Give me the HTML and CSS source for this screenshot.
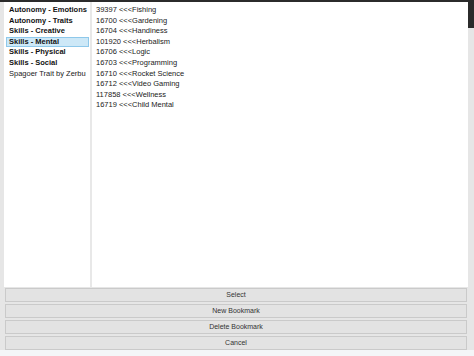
FILE: index.html
```html
<!DOCTYPE html>
<html>
<head>
<meta charset="utf-8">
<link rel="stylesheet" href="styles.css">
</head>
<body>
<div class="window">
  <ul class="cats">
    <li class="b">Autonomy - Emotions</li>
    <li class="b">Autonomy - Traits</li>
    <li class="b">Skills - Creative</li>
    <li class="b sel">Skills - Mental</li>
    <li class="b">Skills - Physical</li>
    <li class="b">Skills - Social</li>
    <li>Spagoer Trait by Zerbu</li>
  </ul>
  <ul class="items">
    <li>39397 &lt;&lt;&lt;Fishing</li>
    <li>16700 &lt;&lt;&lt;Gardening</li>
    <li>16704 &lt;&lt;&lt;Handiness</li>
    <li>101920 &lt;&lt;&lt;Herbalism</li>
    <li>16706 &lt;&lt;&lt;Logic</li>
    <li>16703 &lt;&lt;&lt;Programming</li>
    <li>16710 &lt;&lt;&lt;Rocket Science</li>
    <li>16712 &lt;&lt;&lt;Video Gaming</li>
    <li>117858 &lt;&lt;&lt;Wellness</li>
    <li>16719 &lt;&lt;&lt;Child Mental</li>
  </ul>
</div>
<div class="buttons">
  <button class="btn">Select</button>
  <button class="btn">New Bookmark</button>
  <button class="btn">Delete Bookmark</button>
  <button class="btn">Cancel</button>
</div>
</body>
</html>
```
FILE: styles.css
```css
html, body {
  margin: 0;
  padding: 0;
}
body {
  width: 474px;
  height: 356px;
  overflow: hidden;
  font-family: "Liberation Sans", Arial, sans-serif;
  font-size: 7.5px;
  color: #222;
  background:
    linear-gradient(#2b2b2b, #2b2b2b) right top / 6px 28px no-repeat,
    linear-gradient(#f4f6f8, #f4f6f8) left bottom / 100% 6px no-repeat,
    linear-gradient(#2b2b2b 0 2px, #e6e6e6 2px);
}
.window {
  margin: 2px 6px 0 4px;
  height: 285px;
  background: #fff;
  display: flex;
}
ul {
  list-style: none;
  margin: 0;
  padding: 0;
}
li {
  line-height: 10.6px;
  height: 10.6px;
  white-space: nowrap;
}
.cats {
  width: 86px;
  flex: none;
  padding-top: 3px;
  border-right: 2px solid #e8e8e8;
}
.cats li {
  padding-left: 3px;
  margin: 0 1px 0 2px;
  box-sizing: border-box;
}
.cats .b {
  font-weight: bold;
  color: #111;
}
.cats .sel {
  background: #cde8f7;
  border: 1px solid #8ec8ea;
  padding-left: 2px;
  line-height: 8.6px;
}
.items {
  flex: 1;
  padding: 3px 0 0 4px;
}
.buttons {
  margin: 1px 7px 0 5px;
  display: flex;
  flex-direction: column;
  gap: 2px;
}
.btn {
  height: 14px;
  margin: 0;
  padding: 0;
  background: #e3e3e3;
  border: 1px solid #cacaca;
  font-family: "Liberation Sans", Arial, sans-serif;
  font-size: 7px;
  color: #333;
  line-height: 12px;
  text-align: center;
}
```
